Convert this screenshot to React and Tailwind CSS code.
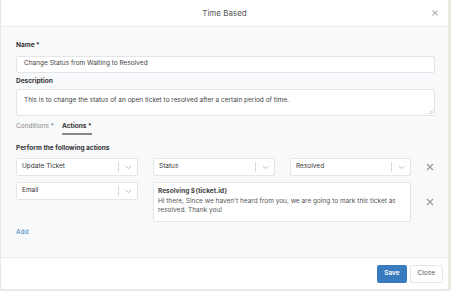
import React from "react";

const font = { fontFamily: "Inter, 'Noto Sans', sans-serif" };

function Chevron() {
  return (
    <svg width="7" height="5" viewBox="0 0 7 5" className="text-gray-400">
      <path d="M0.8 1 L3.5 3.6 L6.2 1" fill="none" stroke="currentColor" strokeWidth="0.7" />
    </svg>
  );
}

function Select({ value, w }) {
  return (
    <div className={`flex h-[18px] shrink-0 items-center rounded-[2px] border border-[#e3e5e8] bg-white ${w}`}>
      <span className="flex-1 pl-[5px] text-[6.5px] text-[#333]">{value}</span>
      <span className="h-[10px] w-px bg-[#d9d9d9]" />
      <span className="flex w-[18px] justify-center">
        <Chevron />
      </span>
    </div>
  );
}

function XIcon() {
  return (
    <svg width="8" height="8" viewBox="0 0 8 8" className="text-[#999]">
      <path d="M1 1 L7 7 M7 1 L1 7" stroke="currentColor" strokeWidth="1.2" />
    </svg>
  );
}

export default function App() {
  return (
    <div className="h-[291px] w-[451px] bg-[#e9e8e3] pl-px pr-[3px] pb-[2px]" style={font}>
      <div className="flex h-full flex-col overflow-hidden rounded-[2px] bg-white">
        <div className="relative flex h-[27px] shrink-0 items-center justify-center border-b border-[#e9ebee]">
          <span className="text-[8px] text-[#555]">Time Based</span>
          <span className="absolute right-[10px] top-[10px]">
            <svg width="6" height="6" viewBox="0 0 6 6">
              <path d="M0.5 0.5 L5.5 5.5 M5.5 0.5 L0.5 5.5" stroke="#b5b5b5" strokeWidth="1.1" />
            </svg>
          </span>
        </div>
        <div className="flex flex-1 flex-col bg-[#f8f9fb] px-[15px] pt-[14px]">
          <div className="text-[6.5px] font-bold text-[#333]">Name *</div>
          <div className="mt-[5px] flex h-[17px] w-[419px] items-center rounded-[2px] border border-[#e3e5e8] bg-white pl-[7px] text-[6.5px] text-[#444]">
            Change Status from Waiting to Resolved
          </div>
          <div className="mt-[4px] text-[6.5px] font-bold text-[#333]">Description</div>
          <div className="relative mt-[2px] h-[27px] w-[419px] rounded-[2px] border border-[#e3e5e8] bg-white pl-[7px] pt-[6px] text-[6.5px] text-[#444]">
            This is to change the status of an open ticket to resolved after a certain period of time.
            <svg className="absolute bottom-[1px] right-[1px]" width="4" height="4" viewBox="0 0 4 4">
              <path d="M0 4 L4 0 M2 4 L4 2" stroke="#999" strokeWidth="0.5" />
            </svg>
          </div>
          <div className="mt-[5px] flex gap-[8px] text-[6.5px]">
            <span className="pt-[1px] text-[#888]">Conditions *</span>
            <span className="border-b-[2px] border-[#888] pb-[2px] pt-[1px] font-bold text-[#333]">Actions *</span>
          </div>
          <div className="mt-[9px] text-[6.5px] font-bold text-[#333]">Perform the following actions</div>
          <div className="mt-[4px] flex items-center">
            <Select value="Update Ticket" w="w-[122px]" />
            <div className="w-[15px] shrink-0" />
            <Select value="Status" w="w-[122px]" />
            <div className="w-[15px] shrink-0" />
            <Select value="Resolved" w="w-[121px]" />
            <div className="flex w-[23px] shrink-0 justify-end">
              <XIcon />
            </div>
          </div>
          <div className="mt-[6px] flex items-start">
            <Select value="Email" w="w-[122px]" />
            <div className="w-[15px] shrink-0" />
            <div className="h-[40px] w-[258px] shrink-0 rounded-[2px] border border-[#e3e5e8] bg-white px-[4px] pt-[4px] text-[6.5px] leading-[9.5px]">
              <div className="font-bold text-[#444]">Resolving ${"{ticket.id}"}</div>
              <div className="text-[#555]">
                Hi there, Since we haven't heard from you, we are going to mark this ticket as resolved. Thank you!
              </div>
            </div>
            <div className="flex h-[40px] w-[23px] shrink-0 items-center justify-end">
              <XIcon />
            </div>
          </div>
          <div className="mt-[6px] text-[6.5px] text-[#3a7bbf]">Add</div>
        </div>
        <div className="flex h-[32px] shrink-0 items-center justify-end gap-[3px] border-t border-[#e9ebee] bg-white pr-[5px]">
          <button className="h-[18px] rounded-[2px] bg-[#3a7bbf] px-[7px] text-[6.5px] font-semibold text-white">Save</button>
          <button className="h-[18px] rounded-[2px] border border-[#e3e5e8] bg-white px-[7px] text-[6.5px] text-[#555]">Close</button>
        </div>
      </div>
    </div>
  );
}
